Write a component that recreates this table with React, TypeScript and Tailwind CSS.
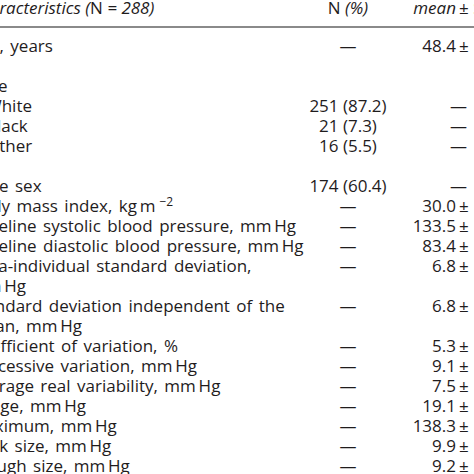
import React from 'react';

type Row = {
  label?: React.ReactNode;
  indent?: boolean;
  n?: string;
  mean?: string;
};

const HG = 'mm\u2009Hg';

const rows: Row[] = [
  { label: 'Age, years', n: '—', mean: '48.4' },
  {},
  { label: 'Race' },
  { label: 'White', indent: true, n: '251 (87.2)', mean: '—' },
  { label: 'Black', indent: true, n: '21 (7.3)', mean: '—' },
  { label: 'Other', indent: true, n: '16 (5.5)', mean: '—' },
  {},
  { label: 'Male sex', n: '174 (60.4)', mean: '—' },
  {
    label: (
      <>
        Body mass index, kg{'\u2009'}m
        <sup className="ml-[4px] text-[12px]">−2</sup>
      </>
    ),
    n: '—',
    mean: '30.0',
  },
  { label: `Baseline systolic blood pressure, ${HG}`, n: '—', mean: '133.5' },
  { label: `Baseline diastolic blood pressure, ${HG}`, n: '—', mean: '83.4' },
  { label: 'Intra-individual standard deviation,', n: '—', mean: '6.8' },
  { label: HG },
  { label: 'Standard deviation independent of the', n: '—', mean: '6.8' },
  { label: `mean, ${HG}` },
  { label: 'Coefficient of variation, %', n: '—', mean: '5.3' },
  { label: `Successive variation, ${HG}`, n: '—', mean: '9.1' },
  { label: `Average real variability, ${HG}`, n: '—', mean: '7.5' },
  { label: `Range, ${HG}`, n: '—', mean: '19.1' },
  { label: `Maximum, ${HG}`, n: '—', mean: '138.3' },
  { label: `Peak size, ${HG}`, n: '—', mean: '9.9' },
  { label: `Trough size, ${HG}`, n: '—', mean: '9.2' },
];

function MeanCell({ value }: { value?: string }) {
  if (!value) return <div />;
  if (value === '—') {
    return (
      <div className="flex">
        <span className="w-[54px]" />
        <span>—</span>
      </div>
    );
  }
  return (
    <div className="flex">
      <span className="w-[60px] text-right">{value}</span>
      <span className="ml-[3px]">±</span>
    </div>
  );
}

export default function App() {
  return (
    <div className="w-[474px] h-[474px] overflow-hidden bg-white text-[#1f1c1d] font-['Open_Sans',sans-serif] text-[17px]">
      <div className="ml-[-30px] w-[570px]">
        <div className="grid grid-cols-[330px_96px_144px] h-5 leading-5 mt-[-2px] italic whitespace-nowrap">
          <div>
            Characteristics (<span className="not-italic">N</span> = 288)
          </div>
          <div className="text-center">
            <span className="not-italic">N</span> (%)
          </div>
          <div className="flex">
            <span className="w-[60px] text-right">mean</span>
            <span className="ml-[3px] not-italic">± SD</span>
          </div>
        </div>
        <div className="mt-2 h-[1.5px] bg-[#8a8a8a]" />
        <div className="mt-[8.5px]">
          {rows.map((r, i) => (
            <div key={i} className="grid grid-cols-[330px_96px_144px] h-5 leading-5 whitespace-nowrap">
              <div className={r.indent ? 'pl-[16px] [word-spacing:2px]' : '[word-spacing:2px]'}>{r.label}</div>
              <div className="text-center">{r.n}</div>
              <MeanCell value={r.mean} />
            </div>
          ))}
        </div>
      </div>
    </div>
  );
}
